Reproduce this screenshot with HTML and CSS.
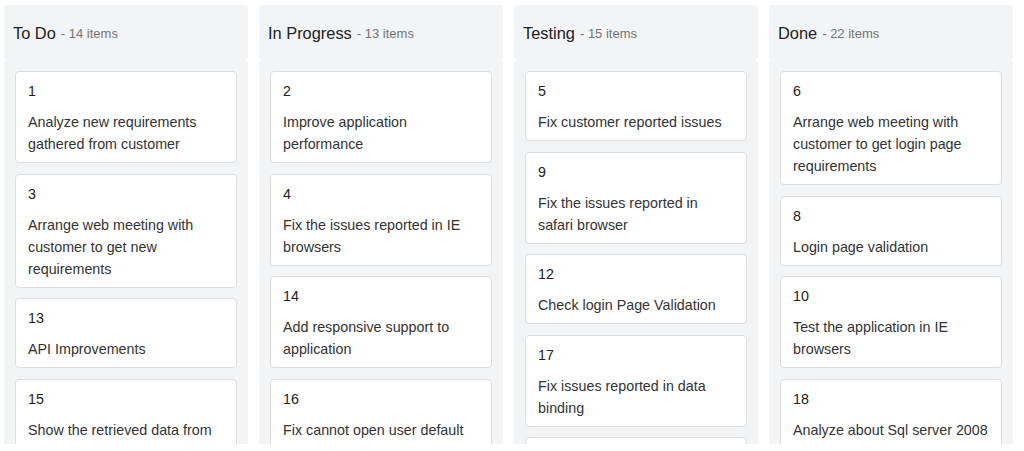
FILE: index.html
```html
<!DOCTYPE html>
<html lang="en">
<head>
  <meta charset="UTF-8" />
  <meta name="viewport" content="width=device-width, initial-scale=1.0" />
  <title>Kanban Board</title>
  <link rel="stylesheet" href="styles.css">
</head>
<body>

  <div class="board">

    <section class="column">
      <div class="column-header">
        <span class="title">To Do</span>
        <span class="count">- 14 items</span>
      </div>
      <div class="column-body">
        <div class="card">
          <div class="card-id">1</div>
          <div class="card-text">Analyze new requirements gathered from customer</div>
        </div>
        <div class="card">
          <div class="card-id">3</div>
          <div class="card-text">Arrange web meeting with customer to get new requirements</div>
        </div>
        <div class="card">
          <div class="card-id">13</div>
          <div class="card-text">API Improvements</div>
        </div>
        <div class="card">
          <div class="card-id">15</div>
          <div class="card-text">Show the retrieved data from the server in grid control</div>
        </div>
      </div>
    </section>

    <section class="column">
      <div class="column-header">
        <span class="title">In Progress</span>
        <span class="count">- 13 items</span>
      </div>
      <div class="column-body">
        <div class="card">
          <div class="card-id">2</div>
          <div class="card-text">Improve application performance</div>
        </div>
        <div class="card">
          <div class="card-id">4</div>
          <div class="card-text">Fix the issues reported in IE browsers</div>
        </div>
        <div class="card">
          <div class="card-id">14</div>
          <div class="card-text">Add responsive support to application</div>
        </div>
        <div class="card">
          <div class="card-id">16</div>
          <div class="card-text">Fix cannot open user default database error</div>
        </div>
      </div>
    </section>

    <section class="column">
      <div class="column-header">
        <span class="title">Testing</span>
        <span class="count">- 15 items</span>
      </div>
      <div class="column-body">
        <div class="card">
          <div class="card-id">5</div>
          <div class="card-text">Fix customer reported issues</div>
        </div>
        <div class="card">
          <div class="card-id">9</div>
          <div class="card-text">Fix the issues reported in safari browser</div>
        </div>
        <div class="card">
          <div class="card-id">12</div>
          <div class="card-text">Check login Page Validation</div>
        </div>
        <div class="card">
          <div class="card-id">17</div>
          <div class="card-text">Fix issues reported in data binding</div>
        </div>
        <div class="card">
          <div class="card-id">20</div>
          <div class="card-text">Test the application in Chrome browsers</div>
        </div>
      </div>
    </section>

    <section class="column">
      <div class="column-header">
        <span class="title">Done</span>
        <span class="count">- 22 items</span>
      </div>
      <div class="column-body">
        <div class="card">
          <div class="card-id">6</div>
          <div class="card-text">Arrange web meeting with customer to get login page requirements</div>
        </div>
        <div class="card">
          <div class="card-id">8</div>
          <div class="card-text">Login page validation</div>
        </div>
        <div class="card">
          <div class="card-id">10</div>
          <div class="card-text">Test the application in IE browsers</div>
        </div>
        <div class="card">
          <div class="card-id">18</div>
          <div class="card-text">Analyze about Sql server 2008 database issues</div>
        </div>
      </div>
    </section>

  </div>

</body>
</html>
```

FILE: styles.css
```css
body {
  font-family: "Liberation Sans", Arial, sans-serif;
  background: #ffffff;
  color: #212121;
  margin: 0;
  padding: 0;
}

.board {
  display: flex;
  gap: 11px;
  padding: 5px 4px 0;
  height: 444px;
  box-sizing: border-box;
  overflow: hidden;
}

.column {
  width: 244px;
  display: flex;
  flex-direction: column;
}

.column-header {
  background: #f3f4f6;
  border-radius: 4px;
  height: 55px;
  padding: 1px 9px 0;
  box-sizing: border-box;
  display: flex;
  align-items: center;
  gap: 5px;
  flex-shrink: 0;
}

.title {
  font-size: 16.4px;
  color: #212121;
}

.count {
  font-size: 13px;
  color: #757575;
}

.column-body {
  flex: 1;
  background: #f3f4f6;
  border-radius: 4px 4px 0 0;
  padding: 11px 11px 0;
  display: flex;
  flex-direction: column;
  gap: 10.5px;
  overflow: hidden;
}

.card {
  background: #ffffff;
  border: 1px solid #dedede;
  border-radius: 4px;
  padding: 8px 12px 7px;
  font-size: 14.3px;
  line-height: 22px;
  color: #333333;
  flex-shrink: 0;
}

.card-id {
  margin-bottom: 9px;
  color: #212121;
}
```
